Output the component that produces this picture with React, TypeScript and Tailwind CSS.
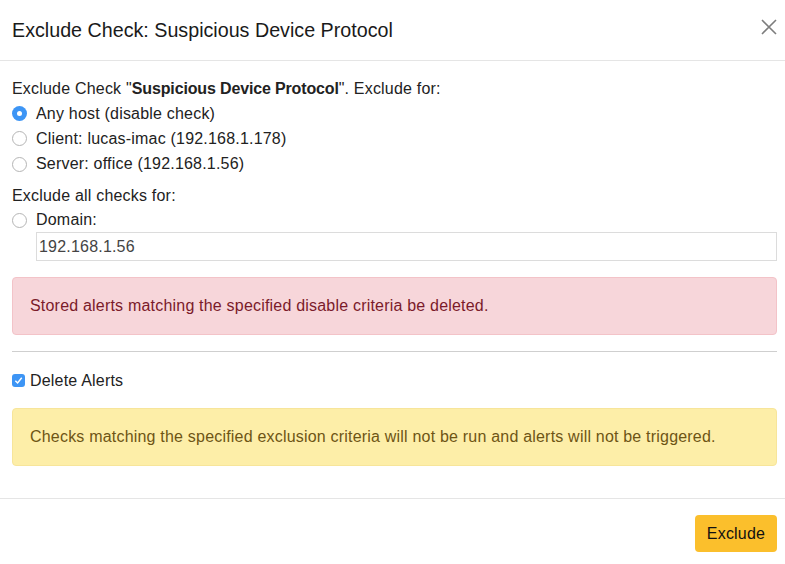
import React from "react";

function Radio({ checked }: { checked?: boolean }) {
  return checked ? (
    <span className="inline-flex h-[15px] w-[15px] shrink-0 items-center justify-center rounded-full bg-[#3d95f5]">
      <span className="h-[5px] w-[5px] rounded-full bg-white" />
    </span>
  ) : (
    <span className="inline-block h-[15px] w-[15px] shrink-0 rounded-full border border-[#b5b5b5] bg-white" />
  );
}

export default function App() {
  return (
    <div
      className="flex h-[564px] w-full flex-col bg-white text-[16px] leading-[24px] tracking-[0.2px] text-[#222]"
      style={{ fontFamily: '"Liberation Sans", Arial, sans-serif' }}
    >
      <div className="flex h-[61px] shrink-0 items-center justify-between border-b border-[#e5e5e5] pl-3 pr-[7px]">
        <h1 className="text-[19.7px] tracking-normal text-[#1a1a1a]">Exclude Check: Suspicious Device Protocol</h1>
        <svg width="16" height="16" viewBox="0 0 16 16" className="mb-[7px] mr-[1px]">
          <path d="M1 1 L15 15 M15 1 L1 15" stroke="#7d7d7d" strokeWidth="1.6" />
        </svg>
      </div>
      <div className="flex flex-col pl-3 pr-2 pt-4">
        <div>
          Exclude Check "<b className="tracking-[-0.15px]">Suspicious Device Protocol</b>". Exclude for:
        </div>
        <label className="flex h-[25px] items-center gap-[9px]">
          <Radio checked />
          <span>Any host (disable check)</span>
        </label>
        <label className="flex h-[25px] items-center gap-[9px]">
          <Radio />
          <span>Client: lucas-imac (192.168.1.178)</span>
        </label>
        <label className="flex h-[26px] items-center gap-[9px]">
          <Radio />
          <span>Server: office (192.168.1.56)</span>
        </label>
        <div className="mt-[7px]">Exclude all checks for:</div>
        <label className="flex h-[24px] items-center gap-[9px]">
          <Radio />
          <span>Domain:</span>
        </label>
        <div className="ml-6 flex h-[29px] items-center border border-[#dcdcdc] pl-[2px] text-[#444]">
          192.168.1.56
        </div>
        <div className="mt-4 rounded-[4px] border border-[#f3c3c8] bg-[#f7d6da] px-[17px] py-4 text-[#7b1b2a]">
          Stored alerts matching the specified disable criteria be deleted.
        </div>
        <hr className="mt-4 border-t border-[#cfcfcf]" />
        <label className="mt-4 flex h-[25px] items-center gap-[5px]">
          <span className="inline-flex h-[13px] w-[13px] items-center justify-center rounded-[3px] bg-[#3d95f5]">
            <svg width="9" height="9" viewBox="0 0 10 10">
              <path d="M1.5 5.2 L4 7.8 L8.6 2" stroke="white" strokeWidth="1.6" fill="none" />
            </svg>
          </span>
          <span>Delete Alerts</span>
        </label>
        <div className="mt-[15px] rounded-[4px] border border-[#f7e59a] bg-[#fdeea8] px-[17px] py-4 text-[#6e5515]">
          Checks matching the specified exclusion criteria will not be run and alerts will not be triggered.
        </div>
      </div>
      <div className="mt-[32px] flex justify-end border-t border-[#e5e5e5] px-2 pt-4">
        <button className="h-[37px] w-[82px] rounded-[4px] bg-[#fbbf2c] text-[16px] text-[#111]">Exclude</button>
      </div>
    </div>
  );
}
